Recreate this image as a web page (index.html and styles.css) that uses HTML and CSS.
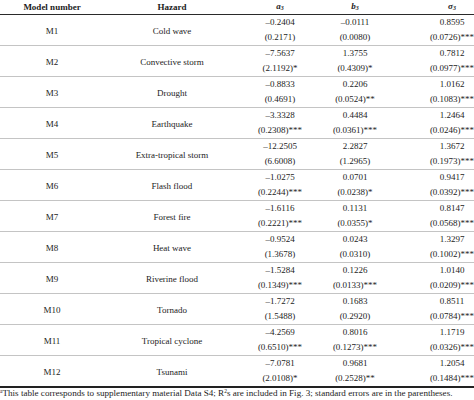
FILE: index.html
```html
<!DOCTYPE html>
<html>
<head>
<meta charset="utf-8">
<link rel="stylesheet" href="styles.css">
</head>
<body>
<div class="table">
  <div class="head">
    <div class="cell">Model number</div>
    <div class="cell">Hazard</div>
    <div class="cell sym">a<sub>3</sub></div>
    <div class="cell sym">b<sub>3</sub></div>
    <div class="cell sym">σ<sub>3</sub></div>
  </div>
  <div class="group"><div class="cell">M1</div><div class="cell">Cold wave</div><div class="val"><span>–0.2404</span><span>(0.2171)</span></div><div class="val"><span>–0.0111</span><span>(0.0080)</span></div><div class="val"><span>0.8595</span><span>(0.0726)***</span></div></div>
  <div class="group"><div class="cell">M2</div><div class="cell">Convective storm</div><div class="val"><span>–7.5637</span><span>(2.1192)*</span></div><div class="val"><span>1.3755</span><span>(0.4309)*</span></div><div class="val"><span>0.7812</span><span>(0.0977)***</span></div></div>
  <div class="group"><div class="cell">M3</div><div class="cell">Drought</div><div class="val"><span>–0.8833</span><span>(0.4691)</span></div><div class="val"><span>0.2206</span><span>(0.0524)**</span></div><div class="val"><span>1.0162</span><span>(0.1083)***</span></div></div>
  <div class="group"><div class="cell">M4</div><div class="cell">Earthquake</div><div class="val"><span>–3.3328</span><span>(0.2308)***</span></div><div class="val"><span>0.4484</span><span>(0.0361)***</span></div><div class="val"><span>1.2464</span><span>(0.0246)***</span></div></div>
  <div class="group"><div class="cell">M5</div><div class="cell">Extra-tropical storm</div><div class="val"><span>–12.2505</span><span>(6.6008)</span></div><div class="val"><span>2.2827</span><span>(1.2965)</span></div><div class="val"><span>1.3672</span><span>(0.1973)***</span></div></div>
  <div class="group"><div class="cell">M6</div><div class="cell">Flash flood</div><div class="val"><span>–1.0275</span><span>(0.2244)***</span></div><div class="val"><span>0.0701</span><span>(0.0238)*</span></div><div class="val"><span>0.9417</span><span>(0.0392)***</span></div></div>
  <div class="group"><div class="cell">M7</div><div class="cell">Forest fire</div><div class="val"><span>–1.6116</span><span>(0.2221)***</span></div><div class="val"><span>0.1131</span><span>(0.0355)*</span></div><div class="val"><span>0.8147</span><span>(0.0568)***</span></div></div>
  <div class="group"><div class="cell">M8</div><div class="cell">Heat wave</div><div class="val"><span>–0.9524</span><span>(1.3678)</span></div><div class="val"><span>0.0243</span><span>(0.0310)</span></div><div class="val"><span>1.3297</span><span>(0.1002)***</span></div></div>
  <div class="group"><div class="cell">M9</div><div class="cell">Riverine flood</div><div class="val"><span>–1.5284</span><span>(0.1349)***</span></div><div class="val"><span>0.1226</span><span>(0.0133)***</span></div><div class="val"><span>1.0140</span><span>(0.0209)***</span></div></div>
  <div class="group"><div class="cell">M10</div><div class="cell">Tornado</div><div class="val"><span>–1.7272</span><span>(1.5488)</span></div><div class="val"><span>0.1683</span><span>(0.2920)</span></div><div class="val"><span>0.8511</span><span>(0.0784)***</span></div></div>
  <div class="group"><div class="cell">M11</div><div class="cell">Tropical cyclone</div><div class="val"><span>–4.2569</span><span>(0.6510)***</span></div><div class="val"><span>0.8016</span><span>(0.1273)***</span></div><div class="val"><span>1.1719</span><span>(0.0326)***</span></div></div>
  <div class="group last"><div class="cell">M12</div><div class="cell">Tsunami</div><div class="val"><span>–7.0781</span><span>(2.0108)*</span></div><div class="val"><span>0.9681</span><span>(0.2528)**</span></div><div class="val"><span>1.2054</span><span>(0.1484)***</span></div></div>
</div>
<p class="note"><sup>a</sup>This table corresponds to supplementary material Data S4; R<sup>2</sup>s are included in Fig. 3; standard errors are in the parentheses.</p>
</body>
</html>
```
FILE: styles.css
```css
html, body {
  margin: 0;
  padding: 0;
  background: #fff;
  overflow: hidden;
}
body {
  width: 474px;
  font-family: "Liberation Serif", "Times New Roman", serif;
  color: #1c1c1c;
  font-size: 9px;
}
.table {
  width: 474px;
  overflow: hidden;
}
.head, .group {
  display: grid;
  grid-template-columns: 104px 136px 80px 70px 124px;
  width: 514px;
}
.head {
  height: 14px;
  border-bottom: 1.5px solid #2a2a2a;
  font-weight: bold;
  align-items: center;
}
.head .cell {
  text-align: center;
  line-height: 12px;
}
.sym {
  font-style: italic;
}
.sym sub {
  font-size: 6px;
  vertical-align: -1px;
}
.group {
  height: 30px;
  border-bottom: 1px solid #c4c4c4;
  align-items: center;
}
.group.last {
  border-bottom: 2px solid #222;
}
.cell {
  text-align: center;
}
.val {
  display: flex;
  flex-direction: column;
  align-items: center;
  line-height: 15px;
  padding-bottom: 1px;
}
.note {
  margin: 0;
  font-size: 9.1px;
  line-height: 11px;
  white-space: nowrap;
}
.note sup {
  font-size: 5.5px;
  vertical-align: 3px;
  line-height: 0;
}
```
